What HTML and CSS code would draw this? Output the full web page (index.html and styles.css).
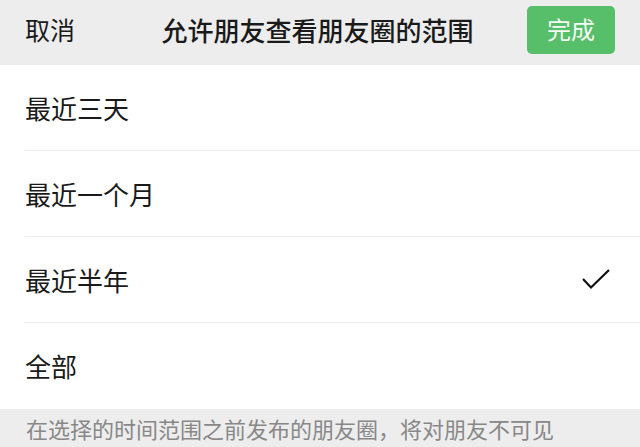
FILE: index.html
```html
<!DOCTYPE html>
<html lang="zh-CN">

<head>
  <meta charset="UTF-8">
  <meta name="viewport" content="width=device-width, initial-scale=1.0">
  <title>允许朋友查看朋友圈的范围</title>
  <link rel="stylesheet" href="styles.css">
</head>

<body>
  <header class="nav">
    <span class="nav-cancel">取消</span>
    <h1 class="nav-title">允许朋友查看朋友圈的范围</h1>
    <button class="nav-done">完成</button>
  </header>

  <ul class="options">
    <li>最近三天</li>
    <li>最近一个月</li>
    <li class="checked">
      最近半年
      <svg class="check" width="30" height="22" viewBox="0 0 30 22">
        <path d="M2 11 L10 19.5 L28 2" fill="none" stroke="#111" stroke-width="2.2" />
      </svg>
    </li>
    <li>全部</li>
  </ul>

  <p class="tip">在选择的时间范围之前发布的朋友圈，将对朋友不可见</p>
</body>

</html>
```

FILE: styles.css
```css
html,
body {
  margin: 0;
  padding: 0;
}

body {
  width: 640px;
  height: 447px;
  overflow: hidden;
  background: #ededed;
  font-family: "Noto Sans CJK SC", "Noto Sans", sans-serif;
  color: #1a1a1a;
}

.nav {
  display: flex;
  align-items: center;
  height: 65px;
  padding: 0 25px 0 25px;
  box-sizing: border-box;
  background: #ededed;
}

.nav-cancel {
  font-size: 25px;
  line-height: 1;
  margin-top: -6px;
}

.nav-title {
  flex: 1;
  margin: -6px 0 0;
  padding-left: 33px;
  text-align: center;
  font-size: 26px;
  font-weight: 500;
  line-height: 1;
}

.nav-done {
  width: 88px;
  height: 48px;
  margin-top: -6px;
  border: none;
  border-radius: 5px;
  background: #57be6a;
  color: #f4fbf5;
  font-family: inherit;
  font-size: 24px;
  padding: 0 0 2px;
}

ul.options {
  list-style: none;
  margin: 0;
  padding: 0 0 0 25px;
  background: #fff;
}

ul.options li {
  display: flex;
  align-items: center;
  justify-content: space-between;
  height: 85px;
  padding-right: 29px;
  border-bottom: 1px solid #ececec;
  font-size: 26px;
  line-height: 1;
}

ul.options li:last-child {
  height: 86px;
  border-bottom: none;
}

.check {
  display: block;
  margin-top: -2px;
}

.tip {
  margin: 0;
  padding: 5px 26px 0;
  font-size: 22px;
  line-height: 1.3;
  color: #888;
}
```
